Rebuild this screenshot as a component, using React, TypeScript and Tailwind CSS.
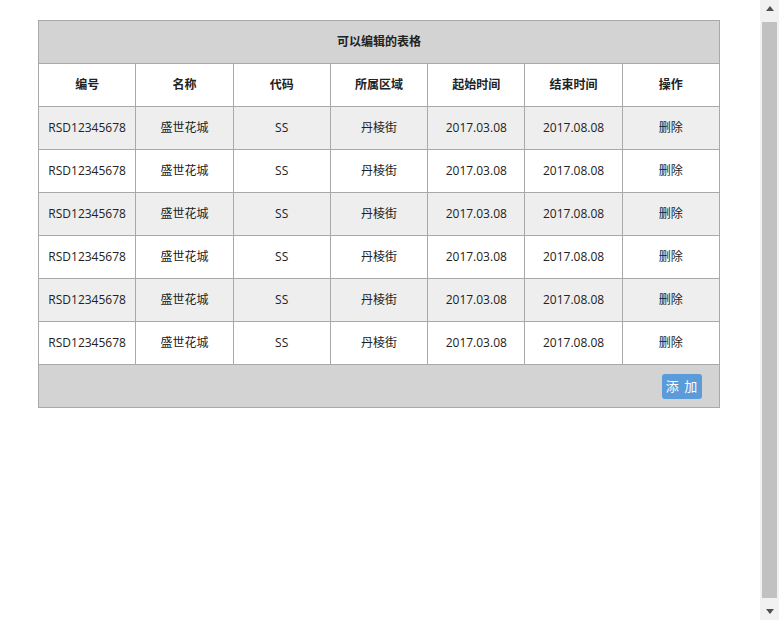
export default function App() {
  const rows = Array.from({ length: 6 });
  const heads = ["编号", "名称", "代码", "所属区域", "起始时间", "结束时间", "操作"];
  const cell = "border border-[#a9a9a9] h-[43px] text-center align-middle p-0";
  return (
    <div className="flex h-[620px] overflow-hidden bg-white" style={{ fontFamily: '"Open Sans","Noto Sans CJK SC",sans-serif' }}>
      <div className="flex-1 pt-[20px] pl-[38px]">
        <table className="w-[682px] border-collapse text-[12px] text-[#222] table-fixed">
          <thead>
            <tr>
              <th colSpan={7} className={`${cell} bg-[#d3d3d3] font-bold`}>可以编辑的表格</th>
            </tr>
            <tr>
              {heads.map((h) => (
                <th key={h} className={`${cell} bg-white font-bold`}>{h}</th>
              ))}
            </tr>
          </thead>
          <tbody>
            {rows.map((_, i) => (
              <tr key={i} className={i % 2 === 0 ? "bg-[#eeeeee]" : "bg-white"}>
                <td className={cell}>RSD12345678</td>
                <td className={cell}>盛世花城</td>
                <td className={cell}>SS</td>
                <td className={cell}>丹棱街</td>
                <td className={cell}>2017.03.08</td>
                <td className={cell}>2017.08.08</td>
                <td className={cell}>删除</td>
              </tr>
            ))}
            <tr>
              <td colSpan={7} className={`${cell} bg-[#d3d3d3]`}>
                <div className="flex justify-end pr-[17px]">
                  <button className="w-[40px] h-[25px] rounded-[3px] bg-[#5b9bd9] text-white text-[13px] leading-none tracking-[1px]">添 加</button>
                </div>
              </td>
            </tr>
          </tbody>
        </table>
      </div>
      <div className="w-[19px] bg-[#f1f1f1] flex flex-col items-center">
        <div className="h-[17px] flex items-center justify-center">
          <svg width="8" height="5" viewBox="0 0 8 5"><path d="M0 5 L4 0 L8 5 Z" fill="#505050" /></svg>
        </div>
        <div className="w-[15px] flex-1 bg-[#c1c1c1] my-[5px]" />
        <div className="h-[17px] flex items-center justify-center">
          <svg width="8" height="5" viewBox="0 0 8 5"><path d="M0 0 L8 0 L4 5 Z" fill="#505050" /></svg>
        </div>
      </div>
    </div>
  );
}
